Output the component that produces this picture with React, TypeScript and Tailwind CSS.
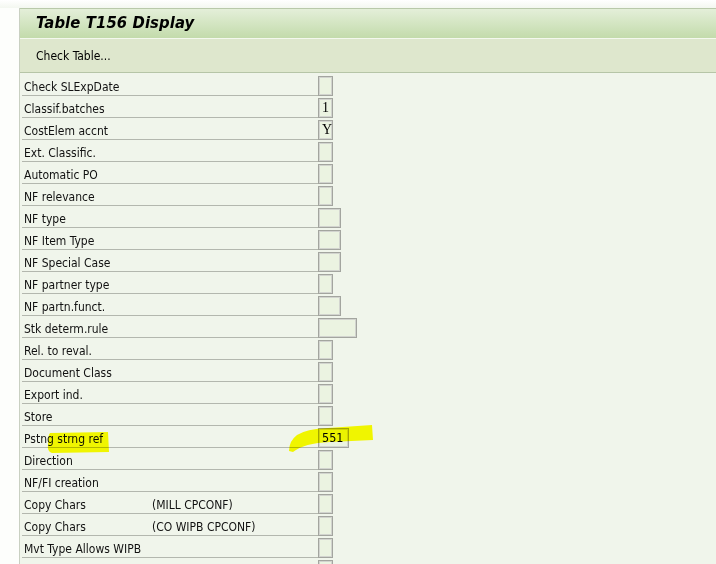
const rows: { label: string; extra?: string; w: string; value?: string; mono?: boolean }[] = [
  { label: "Check SLExpDate", w: "w-[15px]" },
  { label: "Classif.batches", w: "w-[15px]", value: "1", mono: true },
  { label: "CostElem accnt", w: "w-[15px]", value: "Y", mono: true },
  { label: "Ext. Classific.", w: "w-[15px]" },
  { label: "Automatic PO", w: "w-[15px]" },
  { label: "NF relevance", w: "w-[15px]" },
  { label: "NF type", w: "w-[23px]" },
  { label: "NF Item Type", w: "w-[23px]" },
  { label: "NF Special Case", w: "w-[23px]" },
  { label: "NF partner type", w: "w-[15px]" },
  { label: "NF partn.funct.", w: "w-[23px]" },
  { label: "Stk determ.rule", w: "w-[39px]" },
  { label: "Rel. to reval.", w: "w-[15px]" },
  { label: "Document Class", w: "w-[15px]" },
  { label: "Export ind.", w: "w-[15px]" },
  { label: "Store", w: "w-[15px]" },
  { label: "Pstng strng ref", w: "w-[31px]", value: "551" },
  { label: "Direction", w: "w-[15px]" },
  { label: "NF/FI creation", w: "w-[15px]" },
  { label: "Copy Chars", extra: "(MILL CPCONF)", w: "w-[15px]" },
  { label: "Copy Chars", extra: "(CO WIPB CPCONF)", w: "w-[15px]" },
  { label: "Mvt Type Allows WIPB", w: "w-[15px]" },
  { label: "", w: "w-[15px]" },
]

export default function App() {
  return (
    <div
      className="relative h-[564px] w-[716px] overflow-hidden bg-[#fdfefc] text-black font-stretch-condensed"
      style={{ fontFamily: '"DejaVu Sans Condensed", "DejaVu Sans", "Liberation Sans", sans-serif' }}
    >
      <div className="h-[8px] bg-gradient-to-b from-white to-[#f3f7f0]" />
      <div className="ml-[19px] flex h-[556px] flex-col border-l border-[#c9d0c2]">
        {/* title bar */}
        <div className="flex h-[30px] shrink-0 items-center border-t border-[#b9c9aa] bg-gradient-to-b from-[#e4efd9] to-[#c3dbab] pl-[16px]">
          <span className="text-[16.5px] font-bold italic tracking-[0.1px]">Table T156 Display</span>
        </div>
        {/* toolbar */}
        <div className="flex h-[35px] shrink-0 items-center border-t border-[#f4f8ee] border-b border-b-[#b6c5a7] bg-[#dee7cd] pl-[16px] text-[12px]">
          Check Table...
        </div>
        {/* content */}
        <div className="flex-1 bg-[#f0f5eb] pt-[1px]">
          {rows.map((r, i) => (
            <div key={i} className="flex h-[22px] items-end">
              <div className="ml-[2px] flex h-[22px] w-[296px] items-center border-b border-[#b3b7ae] pl-[2px] pt-[4px] text-[12px] text-[#111]">
                <span className="w-[128px]">{r.label}</span>
                {r.extra && <span>{r.extra}</span>}
              </div>
              <div
                className={`${r.w} flex h-[20px] items-center border border-[#a3a59f] bg-[#ebf3e1] pl-[3px] shadow-[inset_1px_1px_0_#d2d4cf,inset_-1px_-1px_0_#d2d4cf] text-[12.5px]`}
              >
                {r.value && (
                  <span
                    className={r.mono ? "text-[14px] leading-none" : ""}
                    style={r.mono ? { fontFamily: '"Liberation Serif", serif' } : undefined}
                  >
                    {r.value}
                  </span>
                )}
              </div>
            </div>
          ))}
        </div>
      </div>
      {/* marker highlights */}
      <svg className="pointer-events-none absolute left-0 top-0 mix-blend-multiply" width="716" height="564">
        <path d="M50,433 L108,432 L109,452 L52,453 Q47,452 48,444 Q48,435 50,433 Z" fill="#ffff00" />
        <path d="M289,451 Q289,441 297,435 Q306,429 328,428 L372,425 L373,440 L330,442 Q304,443 293,452 Z" fill="#ffff00" />
      </svg>
    </div>
  )
}
